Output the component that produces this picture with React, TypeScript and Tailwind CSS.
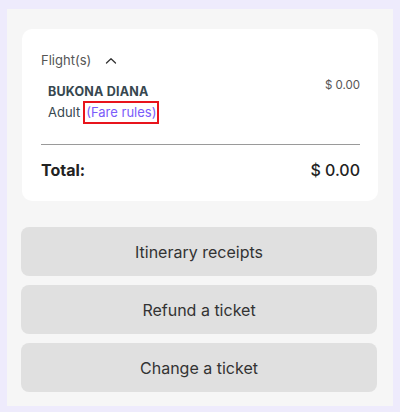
import { useState } from "react";

const ChevronUp = () => (
  <svg width="12" height="7" viewBox="0 0 12 7" fill="none" className="ml-[14px] mt-[1px]">
    <path d="M1.5 6L6 1.8 10.5 6" stroke="#333" strokeWidth="1.3" strokeLinecap="round" strokeLinejoin="round" />
  </svg>
);

const App = () => {
  const [open, setOpen] = useState(true);
  const actions = ["Itinerary receipts", "Refund a ticket", "Change a ticket"];

  return (
    <div
      className="w-[400px] h-[412px] bg-[#eeebfc] pt-[9px] pl-[7px]"
      style={{ fontFamily: "Inter, 'Noto Sans', sans-serif" }}
    >
      <div className="w-[386px] h-[397px] bg-[#f6f6f6] pt-[20px] px-[14px] flex flex-col">
        <div className="w-[356px] h-[172px] ml-[1px] bg-white rounded-[10px] pt-[21px] pl-[19px] pr-[18px]">
          <button className="flex items-center" onClick={() => setOpen(!open)}>
            <span className="text-[13px] leading-[20px] text-[#555]">Flight(s)</span>
            <ChevronUp />
          </button>
          {open && (
            <div className="flex justify-between mt-[13px]">
              <div className="pl-[7px]">
                <div className="text-[12.5px] leading-[18px] font-bold text-[#37474f] tracking-[0.2px]">
                  BUKONA DIANA
                </div>
                <div className="flex items-center text-[13px] leading-[19px] text-[#37474f]">
                  <span>Adult</span>
                  <span className="ml-[3px] border-2 border-[#e8141c] px-px text-[#7a5cfa] h-[23px] flex items-center">
                    (Fare rules)
                  </span>
                </div>
              </div>
              <div className="text-[11.5px] leading-[16px] text-[#555] -mt-[6px]">$ 0.00</div>
            </div>
          )}
          <div className="h-px bg-[#9a9a9a] mt-[20px]" />
          <div className="flex justify-between items-center mt-[13px]">
            <span className="text-[16px] font-bold text-[#222]">Total:</span>
            <span className="text-[16px] font-medium text-[#222]">$ 0.00</span>
          </div>
        </div>
        <div className="flex flex-col gap-[9px] mt-[26px]">
          {actions.map((a) => (
            <button
              key={a}
              className="w-[356px] h-[49px] bg-[#e0e0e0] rounded-[8px] text-[16px] text-[#333] flex items-center justify-center"
            >
              {a}
            </button>
          ))}
        </div>
      </div>
    </div>
  );
};

export default App;
